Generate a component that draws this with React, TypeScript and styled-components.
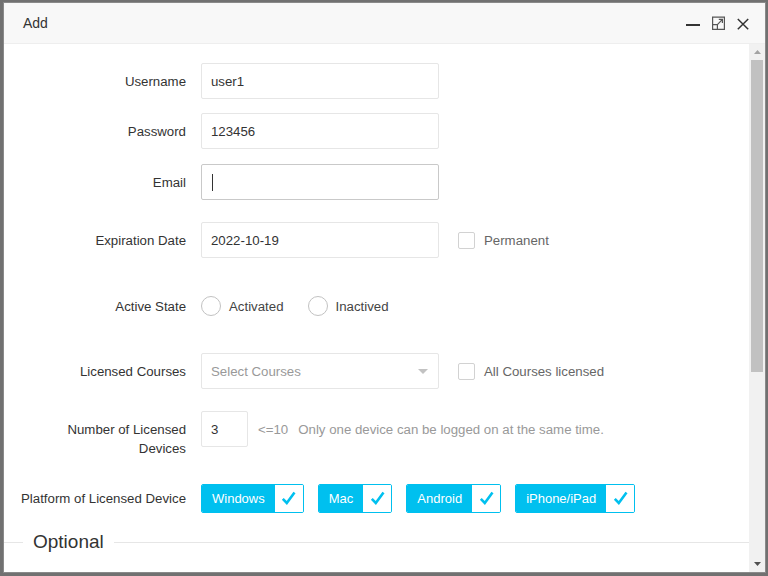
import React from "react";
import styled, { createGlobalStyle } from "styled-components";

const GlobalStyle = createGlobalStyle`
  html, body { margin: 0; padding: 0; height: 576px; overflow: hidden; }
  body {
    background: #717171;
    font-family: "Liberation Sans", Arial, sans-serif;
    font-size: 13.25px;
    color: #333;
  }
  * { box-sizing: border-box; }
`;

const Backdrop = styled.div`
  width: 768px;
  height: 576px;
  padding: 2px 2px 3px 3px;
`;

const Dialog = styled.div`
  width: 763px;
  height: 571px;
  background: #fff;
  border: 1px solid #8a8a8a;
  display: flex;
  flex-direction: column;
  overflow: hidden;
`;

const TitleBar = styled.div`
  height: 41px;
  flex: none;
  background: #f8f8f8;
  border-bottom: 1px solid #eee;
  display: flex;
  align-items: center;
  padding: 0 16px 0 19px;
`;

const Title = styled.div`
  font-size: 14px;
  color: #333;
`;

const Controls = styled.div`
  margin-left: auto;
  display: flex;
  align-items: center;
  gap: 12px;
`;

const IconButton = styled.span<{ $w: number }>`
  width: ${(p) => p.$w}px;
  height: 14px;
  display: block;
  svg { display: block; }
`;

const Body = styled.div`
  flex: 1;
  min-height: 0;
  display: flex;
`;

const Form = styled.div`
  flex: 1;
  min-width: 0;
  overflow: hidden;
  display: flex;
  flex-direction: column;
`;

const Row = styled.div<{ $mt: number }>`
  display: flex;
  align-items: flex-start;
  margin-top: ${(p) => p.$mt}px;
  flex: none;
`;

const Label = styled.div`
  width: 182px;
  flex: none;
  text-align: right;
  padding-top: 9px;
  line-height: 19px;
  color: #333;
  margin-right: 15px;
`;

const Field = styled.div`
  height: 36px;
  display: flex;
  align-items: center;
`;

const InputBox = styled.div<{ $w: number; $focused?: boolean }>`
  width: ${(p) => p.$w}px;
  height: 36px;
  border: 1px solid ${(p) => (p.$focused ? "#c9c9c9" : "#e6e6e6")};
  border-radius: 2px;
  background: #fff;
  padding: 0 10px 0 9px;
  display: flex;
  align-items: center;
  justify-content: space-between;
  color: #333;
`;

const Placeholder = styled.span`
  color: #999;
`;

const Caret = styled.span`
  width: 1px;
  height: 17px;
  background: #333;
  margin-left: 1px;
`;

const SelectArrow = styled.span`
  width: 0;
  height: 0;
  border-left: 5px solid transparent;
  border-right: 5px solid transparent;
  border-top: 5px solid #c2c2c2;
`;

const Checkbox = styled.span`
  width: 17px;
  height: 17px;
  border: 1px solid #d2d2d2;
  border-radius: 2px;
  margin-left: 19px;
  background: #fff;
`;

const CheckText = styled.span`
  margin-left: 9px;
  color: #666;
`;

const RadioOption = styled.span`
  display: flex;
  align-items: center;
  margin-right: 24px;
`;

const Radio = styled.span`
  width: 20px;
  height: 20px;
  border: 1px solid #c2c2c2;
  border-radius: 50%;
  background: #fff;
`;

const RadioText = styled.span`
  margin-left: 8px;
  color: #444;
`;

const Hint = styled.span`
  margin-left: 10px;
  color: #999;
`;

const HintLimit = styled.span`
  margin-right: 10px;
`;

const Toggle = styled.span`
  display: flex;
  height: 29px;
  border: 1px solid #00c0ef;
  border-radius: 2px;
  margin-right: 14px;
  overflow: hidden;
`;

const ToggleText = styled.span`
  background: #00c0ef;
  color: #fff;
  font-size: 13px;
  padding: 0 10px;
  line-height: 27px;
`;

const ToggleCheck = styled.span`
  width: 28px;
  background: #fff;
  display: flex;
  align-items: center;
  justify-content: center;
  svg { display: block; }
`;

const Legend = styled.div<{ $mt: number }>`
  margin-top: ${(p) => p.$mt}px;
  height: 24px;
  flex: none;
  display: flex;
  align-items: center;
`;

const LegendLine = styled.span<{ $grow?: boolean }>`
  ${(p) => (p.$grow ? "flex: 1;" : "width: 19px;")}
  border-top: 1px solid #e6e6e6;
`;

const LegendText = styled.span`
  padding: 0 10px;
  font-size: 19px;
  color: #333;
`;

const ScrollBar = styled.div`
  width: 16px;
  flex: none;
  background: #f1f1f1;
  display: flex;
  flex-direction: column;
`;

const ScrollButton = styled.div`
  height: 16px;
  flex: none;
  display: flex;
  align-items: center;
  justify-content: center;
  svg { display: block; }
`;

const ScrollThumb = styled.div`
  height: 312px;
  flex: none;
  margin: 0 2px;
  background: #c1c1c1;
`;

const ScrollRest = styled.div`
  flex: 1;
`;

const Check = () => (
  <svg width="15" height="14" viewBox="0 0 15 14">
    <path d="M1.8 7.8 L5.8 12 L13.5 1.5" fill="none" stroke="#00c0ef" strokeWidth="2.6" />
  </svg>
);

const platforms = ["Windows", "Mac", "Android", "iPhone/iPad"];

export default function App() {
  return (
    <>
      <GlobalStyle />
      <Backdrop>
        <Dialog>
          <TitleBar>
            <Title>Add</Title>
            <Controls>
              <IconButton $w={14}>
                <svg width="14" height="14" viewBox="0 0 14 14">
                  <rect x="0" y="8" width="14" height="2" fill="#333" />
                </svg>
              </IconButton>
              <IconButton $w={13}>
                <svg width="13" height="14" viewBox="0 0 13 14">
                  <path d="M0.6 1.1 H12.4 V13.4 H0.6 Z" fill="none" stroke="#555" strokeWidth="1.2" />
                  <path d="M0.6 8.6 H5.4 V13.4" fill="none" stroke="#555" strokeWidth="1.2" />
                  <path d="M5.4 8.6 L10.4 3.4 M6.8 3.4 H10.4 V7" fill="none" stroke="#555" strokeWidth="1.2" />
                </svg>
              </IconButton>
              <IconButton $w={12}>
                <svg width="12" height="14" viewBox="0 0 12 14">
                  <path d="M0.8 3 L11.2 13.2 M11.2 3 L0.8 13.2" fill="none" stroke="#333" strokeWidth="1.5" />
                </svg>
              </IconButton>
            </Controls>
          </TitleBar>
          <Body>
            <Form>
              <Row $mt={19}>
                <Label>Username</Label>
                <Field>
                  <InputBox $w={238}>user1</InputBox>
                </Field>
              </Row>
              <Row $mt={14}>
                <Label>Password</Label>
                <Field>
                  <InputBox $w={238}>123456</InputBox>
                </Field>
              </Row>
              <Row $mt={15}>
                <Label>Email</Label>
                <Field>
                  <InputBox $w={238} $focused>
                    <Caret />
                  </InputBox>
                </Field>
              </Row>
              <Row $mt={22}>
                <Label>Expiration Date</Label>
                <Field>
                  <InputBox $w={238}>2022-10-19</InputBox>
                  <Checkbox />
                  <CheckText>Permanent</CheckText>
                </Field>
              </Row>
              <Row $mt={30}>
                <Label>Active State</Label>
                <Field>
                  <RadioOption>
                    <Radio />
                    <RadioText>Activated</RadioText>
                  </RadioOption>
                  <RadioOption>
                    <Radio />
                    <RadioText>Inactived</RadioText>
                  </RadioOption>
                </Field>
              </Row>
              <Row $mt={29}>
                <Label>Licensed Courses</Label>
                <Field>
                  <InputBox $w={238}>
                    <Placeholder>Select Courses</Placeholder>
                    <SelectArrow />
                  </InputBox>
                  <Checkbox />
                  <CheckText>All Courses licensed</CheckText>
                </Field>
              </Row>
              <Row $mt={22}>
                <Label>
                  Number of Licensed
                  <br />
                  Devices
                </Label>
                <Field>
                  <InputBox $w={47}>3</InputBox>
                  <Hint>
                    <HintLimit>&lt;=10</HintLimit>Only one device can be logged on at the same time.
                  </Hint>
                </Field>
              </Row>
              <Row $mt={22}>
                <Label>Platform of Licensed Device</Label>
                <Field>
                  {platforms.map((p) => (
                    <Toggle key={p}>
                      <ToggleText>{p}</ToggleText>
                      <ToggleCheck>
                        <Check />
                      </ToggleCheck>
                    </Toggle>
                  ))}
                </Field>
              </Row>
              <Legend $mt={14}>
                <LegendLine />
                <LegendText>Optional</LegendText>
                <LegendLine $grow />
              </Legend>
            </Form>
            <ScrollBar>
              <ScrollButton>
                <svg width="7" height="4" viewBox="0 0 7 4">
                  <path d="M0 4 L3.5 0 L7 4 Z" fill="#a3a3a3" />
                </svg>
              </ScrollButton>
              <ScrollThumb />
              <ScrollRest />
              <ScrollButton>
                <svg width="7" height="4" viewBox="0 0 7 4">
                  <path d="M0 0 L7 0 L3.5 4 Z" fill="#505050" />
                </svg>
              </ScrollButton>
            </ScrollBar>
          </Body>
        </Dialog>
      </Backdrop>
    </>
  );
}
